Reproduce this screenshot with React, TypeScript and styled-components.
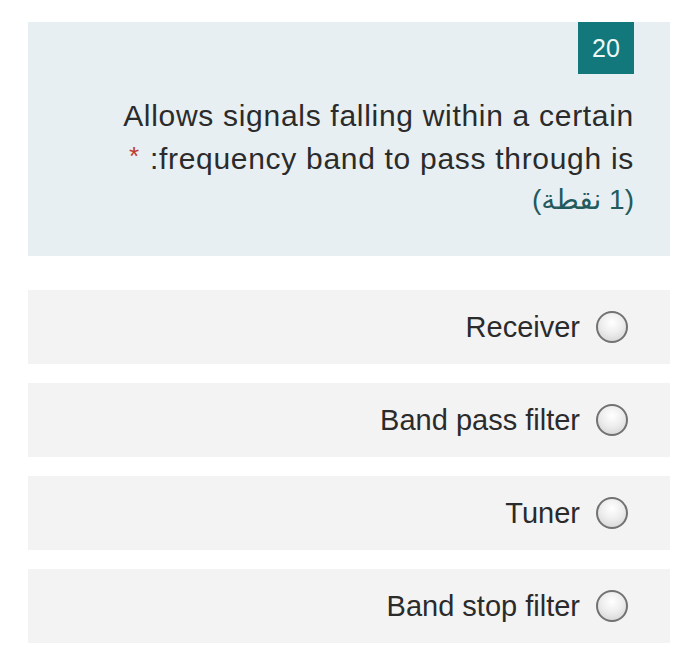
import React from "react";
import styled, { createGlobalStyle } from "styled-components";

const GlobalStyle = createGlobalStyle`
  html, body {
    margin: 0;
    padding: 0;
    background: #ffffff;
  }
  body {
    font-family: "Liberation Sans", Arial, "Noto Sans", sans-serif;
    color: #303030;
  }
`;

const Page = styled.div`
  width: 700px;
  padding: 22px 30px 26px 28px;
  box-sizing: border-box;
  display: flex;
  flex-direction: column;
`;

const QuestionPanel = styled.section`
  background: #e8eff2;
  display: flex;
  flex-direction: column;
  align-items: flex-end;
  padding: 0 36px 36px 36px;
  height: 234px;
  box-sizing: border-box;
`;

const NumberBadge = styled.div`
  width: 56px;
  height: 56px;
  background: #13787b;
  color: #eef8f8;
  display: flex;
  align-items: center;
  justify-content: center;
  font-size: 25px;
`;

const QuestionText = styled.div`
  margin-top: 21px;
  font-size: 30px;
  line-height: 41px;
  letter-spacing: 0.7px;
  color: #2b2b2b;
  text-align: right;
`;

const Line = styled.div`
  white-space: nowrap;
`;

const Required = styled.span`
  color: #c0392b;
  font-size: 26px;
  margin-right: 10px;
  vertical-align: 4px;
`;

const Points = styled.div`
  font-family: "Liberation Sans", "Noto Sans", "DejaVu Sans", sans-serif;
  font-size: 28px;
  line-height: 41px;
  color: #235a5e;
  text-align: right;
`;

const Options = styled.div`
  margin-top: 34px;
  display: flex;
  flex-direction: column;
  gap: 19px;
`;

const OptionRow = styled.label`
  height: 74px;
  background: #f3f3f3;
  display: flex;
  align-items: center;
  justify-content: flex-end;
  gap: 16px;
  padding-right: 42px;
  box-sizing: border-box;
`;

const OptionLabel = styled.span`
  font-size: 29px;
  color: #2b2b2b;
`;

const Radio = styled.span`
  width: 28px;
  height: 28px;
  border-radius: 50%;
  border: 2px solid #727272;
  background: radial-gradient(circle at 50% 35%, #ffffff 0%, #eeeeee 45%, #cfcfcf 100%);
  box-sizing: content-box;
  flex: none;
`;

const options = ["Receiver", "Band pass filter", "Tuner", "Band stop filter"];

export default function App() {
  return (
    <>
      <GlobalStyle />
      <Page>
        <QuestionPanel>
          <NumberBadge>20</NumberBadge>
          <QuestionText>
            <Line>Allows signals falling within a certain</Line>
            <Line>
              <Required>*</Required>:frequency band to pass through is
            </Line>
          </QuestionText>
          <Points dir="rtl">(1 نقطة)</Points>
        </QuestionPanel>
        <Options>
          {options.map((o) => (
            <OptionRow key={o}>
              <OptionLabel>{o}</OptionLabel>
              <Radio />
            </OptionRow>
          ))}
        </Options>
      </Page>
    </>
  );
}
